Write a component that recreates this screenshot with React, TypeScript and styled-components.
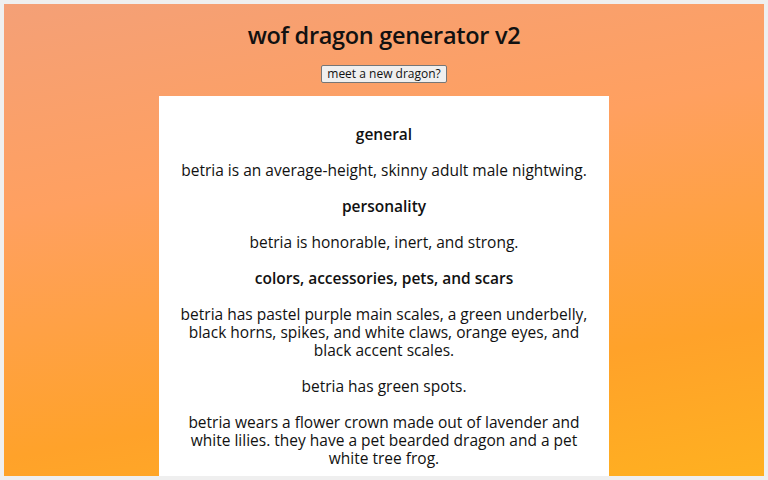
import React from 'react'
import styled, { createGlobalStyle } from 'styled-components'

const GlobalStyle = createGlobalStyle`
    html, body {
        margin:0;
        padding:0;
    }
    body {
        background-color:#efefef;
        padding:4px;
        font-family:"Open Sans", "Liberation Sans", sans-serif;
        overflow:hidden;
    }
`

const Page = styled.div`
    height:calc(100vh - 8px);
    overflow:hidden;
    background:linear-gradient(170deg, #f4a077 0%, #ffa060 35%, #ffa22a 75%, #ffb020 100%);
    display:flex;
    flex-direction:column;
    align-items:center;
    color:#111;
`
const Title = styled.h1`
    font-size:23.5px;
    font-weight:600;
    line-height:28px;
    margin:17px 0 16px 0;
    letter-spacing:-0.3px;
`
const NewButton = styled.button`
    font-family:"Open Sans", "Liberation Sans", sans-serif;
    font-size:12px;
    font-weight:400;
    line-height:14px;
    padding:1px 5px;
    background-color:#efefef;
    border:1px solid #767676;
    border-radius:2px;
    color:#111;
    cursor:pointer;
`
const Card = styled.div`
    margin-top:13px;
    width:450px;
    box-sizing:border-box;
    background-color:white;
    padding:11px 20px;
    text-align:center;
    flex-shrink:0;
`
const Heading = styled.h3`
    font-size:15.5px;
    font-weight:600;
    line-height:18px;
    margin:18px 0;
`
const Text = styled.p`
    font-size:15.5px;
    font-weight:400;
    line-height:18px;
    margin:18px 0;
`

interface Section {
    title: string;
    paragraphs: string[];
}

const sections: Section[] = [
    {
        title: 'general',
        paragraphs: ['betria is an average-height, skinny adult male nightwing.'],
    },
    {
        title: 'personality',
        paragraphs: ['betria is honorable, inert, and strong.'],
    },
    {
        title: 'colors, accessories, pets, and scars',
        paragraphs: [
            'betria has pastel purple main scales, a green underbelly, black horns, spikes, and white claws, orange eyes, and black accent scales.',
            'betria has green spots.',
            'betria wears a flower crown made out of lavender and white lilies. they have a pet bearded dragon and a pet white tree frog.',
        ],
    },
]

const App: React.FunctionComponent = () => {
    return (
        <>
            <GlobalStyle />
            <Page>
                <Title>wof dragon generator v2</Title>
                <NewButton>meet a new dragon?</NewButton>
                <Card>
                    {sections.map((s) => (
                        <React.Fragment key={s.title}>
                            <Heading>{s.title}</Heading>
                            {s.paragraphs.map((p) => (
                                <Text key={p}>{p}</Text>
                            ))}
                        </React.Fragment>
                    ))}
                </Card>
            </Page>
        </>
    )
}
export default App
